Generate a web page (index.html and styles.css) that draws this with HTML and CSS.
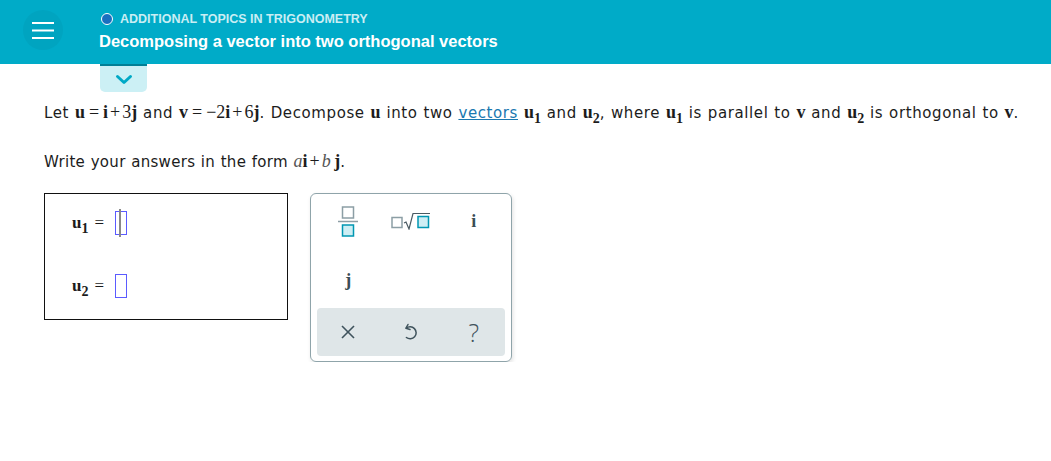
FILE: index.html
```html
<!DOCTYPE html>
<html>
<head>
<meta charset="utf-8">
<link rel="stylesheet" href="styles.css">
</head>
<body>
<header class="topbar">
  <div class="menu-btn">
    <svg width="22" height="18" viewBox="0 0 22 18"><g stroke="#fff" stroke-width="2"><line x1="0" y1="2" x2="22" y2="2"/><line x1="0" y1="9.5" x2="22" y2="9.5"/><line x1="0" y1="17" x2="22" y2="17"/></g></svg>
  </div>
  <div class="titles">
    <div class="topic"><span class="dot"></span>ADDITIONAL TOPICS IN TRIGONOMETRY</div>
    <div class="title">Decomposing a vector into two orthogonal vectors</div>
  </div>
</header>
<div class="tab-row">
  <div class="tab">
    <svg width="18" height="11" viewBox="0 0 18 11"><polyline points="2.5,2.5 9,8.5 15.5,2.5" fill="none" stroke="#00a9c6" stroke-width="3" stroke-linecap="round" stroke-linejoin="round"/></svg>
  </div>
</div>
<main class="content">
  <p class="q">Let <span class="m"><b>u</b><span class="op">=</span><b>i</b><span class="pl">+</span>3<b>j</b></span> and <span class="m"><b>v</b><span class="op">=</span>−2<b>i</b><span class="pl">+</span>6<b>j</b></span>. Decompose <span class="m"><b>u</b></span> into two <a class="link" href="#">vectors</a> <span class="m"><b>u</b><sub>1</sub></span> and <span class="m"><b>u</b><sub>2</sub></span>, where <span class="m"><b>u</b><sub>1</sub></span> is parallel to <span class="m"><b>v</b></span> and <span class="m"><b>u</b><sub>2</sub></span> is orthogonal to <span class="m"><b>v</b></span>.</p>
  <p class="q q2">Write your answers in the form <span class="m"><i>a</i><b>i</b><span class="pl">+</span><i>b</i>&thinsp;<b>j</b></span>.</p>
  <div class="work">
    <div class="answers">
      <div class="ans-row"><span class="m lbl"><b>u</b><sub>1</sub><span class="op">=</span></span><span class="slot active"><span class="caret"></span></span></div>
      <div class="ans-row"><span class="m lbl"><b>u</b><sub>2</sub><span class="op">=</span></span><span class="slot"></span></div>
    </div>
    <div class="keypad">
      <div class="keys">
        <div class="key">
          <svg width="20" height="31" viewBox="0 0 20 31"><rect x="4.5" y="1" width="11" height="11" fill="none" stroke="#8c9ea5" stroke-width="1.5"/><line x1="0" y1="15.5" x2="20" y2="15.5" stroke="#8c9ea5" stroke-width="1.5"/><rect x="4.5" y="19" width="11" height="11" fill="#cdeef4" stroke="#0097b2" stroke-width="1.5"/></svg>
        </div>
        <div class="key">
          <svg width="40" height="18" viewBox="0 0 40 18"><rect x="1" y="5.5" width="10" height="10" fill="none" stroke="#8c9ea5" stroke-width="1.5"/><polyline points="13,11 15,10 18,17 22,1.5 39,1.5" fill="none" stroke="#4a5a62" stroke-width="1.2"/><rect x="27" y="4.5" width="10.5" height="11" fill="#cdeef4" stroke="#0097b2" stroke-width="1.5"/></svg>
        </div>
        <div class="key kchar">i</div>
        <div class="key kchar row2">j</div>
        <div class="key row2"></div>
        <div class="key row2"></div>
      </div>
      <div class="tools">
        <div class="tool">
          <svg width="14" height="14" viewBox="0 0 14 14"><g stroke="#3f535c" stroke-width="1.6"><line x1="1" y1="1" x2="13" y2="13"/><line x1="13" y1="1" x2="1" y2="13"/></g></svg>
        </div>
        <div class="tool">
          <svg width="15" height="19" viewBox="0 0 15 19"><path d="M5 1.5 L3 5.2 L7 6.5" fill="none" stroke="#3f535c" stroke-width="1.5" stroke-linejoin="round" stroke-linecap="round"/><path d="M3.2 5.3 A6 6 0 1 1 3.4 14.5" fill="none" stroke="#3f535c" stroke-width="1.5" stroke-linecap="round"/></svg>
        </div>
        <div class="tool qmark">?</div>
      </div>
    </div>
  </div>
</main>
</body>
</html>
```
FILE: styles.css
```css
* { box-sizing: border-box; }
html, body { margin: 0; padding: 0; background: #fff; }
body { font-family: "DejaVu Sans", Verdana, sans-serif; color: #1c1c1c; }

.topbar {
  height: 64px;
  background: #00abc8;
  display: flex;
  align-items: center;
}
.menu-btn {
  width: 40px; height: 40px;
  margin-left: 23px;
  margin-top: -4px;
  border-radius: 50%;
  background: #00a4c0;
  display: flex; align-items: center; justify-content: center;
}
.titles { margin-left: 36px; margin-top: -1px; }
.topic {
  display: flex; align-items: center;
  font-family: "Liberation Sans", Arial, sans-serif;
  font-weight: bold;
  font-size: 12.5px;
  color: #c9eef4;
  margin-left: 2px;
}
.dot {
  width: 12px; height: 12px; border-radius: 50%;
  background: #1a6fbf;
  border: 1.5px solid #fff;
  margin-right: 7px;
}
.title {
  font-family: "Liberation Sans", Arial, sans-serif;
  font-weight: bold;
  font-size: 16.5px;
  color: #fff;
  margin-top: 6px;
}

.tab-row { padding-left: 100px; }
.tab {
  width: 47px; height: 28px;
  background: #ccf0f5;
  border-top: 2px solid #007f96;
  border-radius: 0 0 5px 5px;
  display: flex; align-items: center; justify-content: center;
}

.content { padding-left: 44px; }
.q {
  margin: 0;
  font-size: 15px;
  letter-spacing: 0.6px;
  word-spacing: 0.5px;
  line-height: 20px;
  white-space: nowrap;
}
.q:first-child { margin-top: 10px; }
.q2 { margin-top: 28px; letter-spacing: 0.3px; }
.m {
  font-family: "Liberation Serif", "Times New Roman", serif;
  font-size: 18px;
  letter-spacing: 0;
  word-spacing: 0;
}
.op { margin: 0 4px; }
.pl { margin: 0 2px; }
.m b { font-weight: bold; }
.m i { font-style: italic; color: #555; }
.m sub { font-size: 14px; vertical-align: -5px; line-height: 0; font-weight: bold; }
.link { color: #1a78b0; }

.work {
  display: flex;
  align-items: flex-start;
  gap: 22px;
  margin-top: 21px;
}
.answers {
  width: 244px; height: 127px;
  border: 1px solid #111;
  padding: 17px 0 0 27px;
  display: flex; flex-direction: column; gap: 39px;
}
.ans-row { display: flex; align-items: center; gap: 9px; height: 24px; }
.lbl { font-size: 17px; }
.lbl .op { margin: 0 2px 0 6px; }
.slot {
  width: 12px; height: 24px;
  border: 1.5px solid #5b5bff;
  position: relative;
}
.caret {
  position: absolute;
  left: 3px; top: -3px;
  width: 2px; height: 28px;
  background: #888;
}

.keypad {
  width: 202px; height: 169px;
  border: 1px solid #8fa4aa;
  border-radius: 6px;
  box-shadow: 1px 2px 4px rgba(0,0,0,0.12);
  padding: 4px 6px 5px 6px;
  display: flex; flex-direction: column;
}
.keys {
  flex: 1;
  display: grid;
  grid-template-columns: repeat(3, 1fr);
  grid-template-rows: 46px 1fr;
}
.key {
  display: flex; align-items: center; justify-content: center;
}
.row2 { padding-top: 8px; }
.kchar {
  font-family: "Liberation Serif", serif;
  font-weight: bold;
  font-size: 18px;
  color: #3a4d55;
}
.tools {
  height: 48px;
  background: #dfe6e8;
  border-radius: 4px;
  display: grid;
  grid-template-columns: repeat(3, 1fr);
}
.tool { display: flex; align-items: center; justify-content: center; }
.qmark {
  font-family: "Open Sans", sans-serif;
  font-size: 25px;
  color: #3f535c;
  font-weight: 300;
}
```
